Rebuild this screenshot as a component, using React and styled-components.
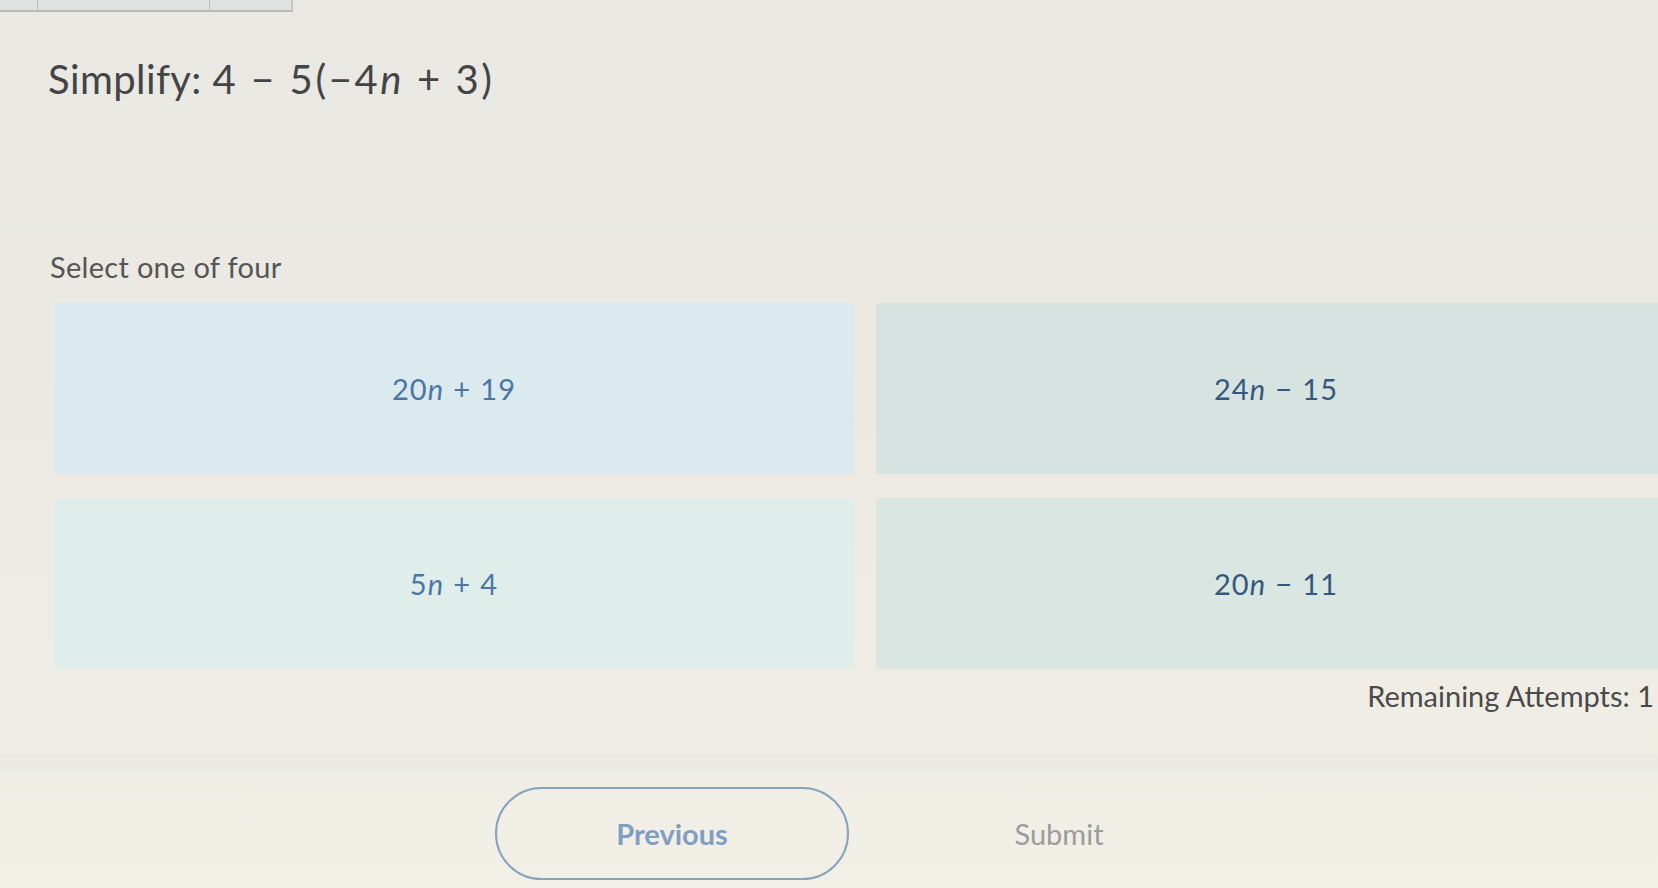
import React from 'react'
import styled, { createGlobalStyle } from 'styled-components'

const GlobalStyle = createGlobalStyle`
  html, body {
    margin: 0;
    padding: 0;
    background: #ebe9e3;
    overflow: hidden;
  }
  body {
    font-family: Lato, "Open Sans", "Liberation Sans", sans-serif;
    color: #4a4a4a;
  }
`

const options = [
  { id: 'a', coef: '20', op: '+', rest: '19', tint: '#dbeaef', ink: '#4a77a6' },
  { id: 'b', coef: '24', op: '−', rest: '15', tint: '#d6e3e1', ink: '#35577c' },
  { id: 'c', coef: '5', op: '+', rest: '4', tint: '#e0eeeb', ink: '#4a77a6' },
  { id: 'd', coef: '20', op: '−', rest: '11', tint: '#d9e6e2', ink: '#35577c' }
]

function Quiz () {
  return (
    <Page>
      <GlobalStyle />
      <TabStrip>
        <Tab width={37} />
        <Tab width={174} />
        <Tab width={82} />
      </TabStrip>

      <Question>
        Simplify: <Math wide>4<Op>−</Op>5(−4<Var>n</Var><Op>+</Op>3)</Math>
      </Question>

      <Prompt>Select one of four</Prompt>

      <Choices>
        {options.map((o) => (
          <Choice key={o.id} tint={o.tint} ink={o.ink}>
            <Math>
              {o.coef}<Var>n</Var><Op>{o.op}</Op>{o.rest}
            </Math>
          </Choice>
        ))}
      </Choices>

      <Attempts>Remaining Attempts: 1</Attempts>

      <Divider />

      <Footer>
        <NavButton outlined>Previous</NavButton>
        <NavButton>Submit</NavButton>
      </Footer>
    </Page>
  )
}

const Page = styled.div`
  width: 1658px;
  height: 888px;
  display: flex;
  flex-direction: column;
  background: linear-gradient(180deg, #e9e8e3 0%, #ece9e2 45%, #f2efe7 100%);
  overflow: hidden;
`

const TabStrip = styled.div`
  display: flex;
  height: 10px;
  width: 291px;
  border-bottom: 2px solid #b7bbb6;
  border-right: 2px solid #c3c6c1;
  background: #dee3df;
`

const Tab = styled.div`
  width: ${(p) => p.width}px;
  border-right: 1px solid #b7bbb6;
  &:last-child { border-right: none; }
`

const Question = styled.h1`
  margin: 45px 0 0 48px;
  font-size: 40px;
  line-height: 44px;
  font-weight: 400;
  color: #444;
  letter-spacing: 0.4px;
`

const Math = styled.span`
  white-space: nowrap;
  letter-spacing: ${(p) => (p.wide ? '2.6px' : '1px')};
`

const Var = styled.i`
  font-style: italic;
`

const Op = styled.span`
  margin: 0 0.32em;
`

const Prompt = styled.p`
  margin: 150px 0 0 50px;
  font-size: 29px;
  line-height: 32px;
  color: #555;
  letter-spacing: 0.3px;
`

const Choices = styled.div`
  display: grid;
  grid-template-columns: 800px 800px;
  grid-auto-rows: 171px;
  gap: 24px 22px;
  margin: 20px 0 0 54px;
`

const Choice = styled.button`
  display: flex;
  align-items: center;
  justify-content: center;
  border: none;
  border-radius: 2px;
  background: ${(p) => p.tint};
  font-family: Lato, "Open Sans", "Liberation Sans", sans-serif;
  font-size: 29px;
  color: ${(p) => p.ink};
  cursor: pointer;
`

const Attempts = styled.div`
  align-self: flex-end;
  margin: 10px 4px 0 0;
  font-size: 29px;
  line-height: 34px;
  color: #4a4a4a;
`

const Divider = styled.div`
  height: 22px;
  margin-top: 40px;
  background: linear-gradient(180deg, #eceae5 0%, #e9e8e3 60%, #efede7 100%);
`

const Footer = styled.div`
  display: flex;
  gap: 33px;
  margin: 12px 0 0 495px;
`

const NavButton = styled.button`
  width: 354px;
  height: 93px;
  border-radius: 47px;
  border: ${(p) => (p.outlined ? '2px solid #87a4bd' : '2px solid transparent')};
  background: transparent;
  font-family: Lato, "Open Sans", "Liberation Sans", sans-serif;
  font-size: 29px;
  font-weight: ${(p) => (p.outlined ? 700 : 400)};
  color: ${(p) => (p.outlined ? '#7f9fc2' : '#9c9c9c')};
  cursor: pointer;
`

export default function App () {
  return <Quiz />
}
